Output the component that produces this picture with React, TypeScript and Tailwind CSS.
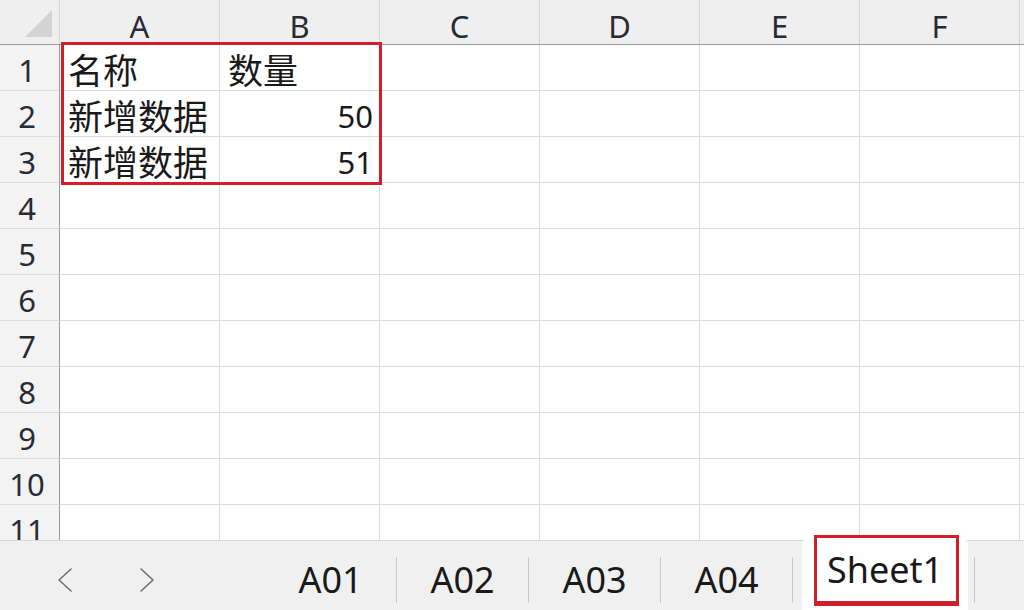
import React from 'react';

const COLS = ['A', 'B', 'C', 'D', 'E', 'F', 'G'];
const ROWS = [1, 2, 3, 4, 5, 6, 7, 8, 9, 10, 11];

type Cell = { text: string; num?: boolean };
const DATA: Record<number, Record<number, Cell>> = {
  1: { 0: { text: '名称' }, 1: { text: '数量' } },
  2: { 0: { text: '新增数据' }, 1: { text: '50', num: true } },
  3: { 0: { text: '新增数据' }, 1: { text: '51', num: true } },
};

const FONT = { fontFamily: '"Noto Sans", "Noto Sans CJK SC", sans-serif' };

function Chevron({ dir }: { dir: 'left' | 'right' }) {
  return (
    <svg width="16" height="24" viewBox="0 0 16 24" fill="none" stroke="#6f6f6f" strokeWidth="1.6" strokeLinecap="round" strokeLinejoin="round">
      {dir === 'left' ? <path d="M14 1 L2 12 L14 23" /> : <path d="M2 1 L14 12 L2 23" />}
    </svg>
  );
}

function Sep() {
  return <div className="w-px h-[46px] bg-[#c8c8c8] shrink-0 mt-[16px] self-start" />;
}

function Tab({ label }: { label: string }) {
  return (
    <div className="w-[131px] shrink-0 h-full flex items-center justify-center pt-[9px]">
      <span className="text-[36px] leading-none text-[#1a1a1a]">{label}</span>
    </div>
  );
}

export default function App() {
  return (
    <div className="w-[1024px] h-[610px] overflow-hidden flex flex-col bg-white" style={FONT}>
      <div className="relative h-[540px] overflow-hidden shrink-0">
        {/* Header row */}
        <div className="flex h-[45px] bg-[#efefef] border-b border-[#9a9a9a]">
          <div className="w-[60px] shrink-0 border-r border-[#d6d6d6] flex items-end justify-end pr-[7px] pb-[7px]">
            <svg width="27" height="27" viewBox="0 0 27 27">
              <polygon points="27,0 27,27 0,27" fill="#d3d3d3" />
            </svg>
          </div>
          {COLS.map((c) => (
            <div key={c} className="w-[160px] shrink-0 border-r border-[#d6d6d6] flex items-center justify-center pt-[8px]">
              <span className="text-[31px] leading-none text-[#2a2a35]">{c === 'G' ? '' : c}</span>
            </div>
          ))}
        </div>
        {/* Body rows */}
        {ROWS.map((r) => (
          <div key={r} className="flex h-[46px]">
            <div className="w-[60px] shrink-0 bg-[#f3f3f3] border-r border-[#9a9a9a] border-b border-b-[#dcdcdc] flex items-center justify-center pr-[5px] pt-[5px]">
              <span className="text-[31px] leading-none text-[#2a2a35]">{r}</span>
            </div>
            {COLS.map((c, ci) => {
              const cell = DATA[r]?.[ci];
              return (
                <div
                  key={c}
                  className={`w-[160px] shrink-0 border-r border-b border-[#dcdcdc] flex items-center pt-[6px] ${cell?.num ? 'justify-end pr-[6px]' : 'justify-start pl-[8px]'}`}
                >
                  {cell && (
                    <span className={`${cell.num ? 'text-[31px]' : 'text-[35px]'} leading-none text-[#1a1a1a] whitespace-nowrap`}>
                      {cell.text}
                    </span>
                  )}
                </div>
              );
            })}
          </div>
        ))}
        {/* Red annotation box */}
        <div className="absolute left-[61px] top-[42px] w-[321px] h-[143px] border-[3px] border-[#cf1f2a] pointer-events-none" />
      </div>

      {/* Sheet tabs bar */}
      <div className="flex-1 flex bg-[#f0f0f0] border-t border-[#d9d9d9]">
        <div className="w-[265px] shrink-0 flex items-center pt-[8px]">
          <div className="ml-[57px]">
            <Chevron dir="left" />
          </div>
          <div className="ml-[66px]">
            <Chevron dir="right" />
          </div>
        </div>
        <Tab label="A01" />
        <Sep />
        <Tab label="A02" />
        <Sep />
        <Tab label="A03" />
        <Sep />
        <Tab label="A04" />
        <Sep />
        <div className="relative w-[181px] shrink-0 h-full">
          <div className="absolute left-[9px] right-[6px] top-[-4px] bottom-0 bg-white rounded-t-[8px] flex items-center justify-center pb-[8px]">
            <span className="text-[36px] leading-none text-[#1a1a1a]">Sheet1</span>
          </div>
          <div className="absolute left-[21px] w-[145px] top-[-6px] h-[71px] border-[3px] border-b-[5px] border-[#cf1f2a] pointer-events-none" />
        </div>
        <Sep />
      </div>
    </div>
  );
}
